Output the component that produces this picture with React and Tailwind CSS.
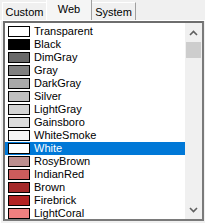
import React from 'react';

const colors = [
  { name: 'Transparent', hex: '#ffffff' },
  { name: 'Black', hex: '#000000' },
  { name: 'DimGray', hex: '#696969' },
  { name: 'Gray', hex: '#808080' },
  { name: 'DarkGray', hex: '#a9a9a9' },
  { name: 'Silver', hex: '#c0c0c0' },
  { name: 'LightGray', hex: '#d3d3d3' },
  { name: 'Gainsboro', hex: '#dcdcdc' },
  { name: 'WhiteSmoke', hex: '#f5f5f5' },
  { name: 'White', hex: '#ffffff' },
  { name: 'RosyBrown', hex: '#bc8f8f' },
  { name: 'IndianRed', hex: '#cd5c5c' },
  { name: 'Brown', hex: '#a52a2a' },
  { name: 'Firebrick', hex: '#b22222' },
  { name: 'LightCoral', hex: '#f08080' },
];

function Tab({ label, active, width }) {
  if (active) {
    return (
      <div
        className="relative z-10 -mx-[1px] flex h-[21px] items-start justify-center border-l border-t border-r border-l-white border-t-white border-r-[#a0a0a0] bg-[#f5f5f5] pt-[3px]"
        style={{ width }}
      >
        {label}
      </div>
    );
  }
  return (
    <div
      className="flex h-[18px] items-start justify-center border-l border-t border-r border-l-white border-t-white border-r-[#a0a0a0] pt-[3px]"
      style={{ width }}
    >
      {label}
    </div>
  );
}

export default function App() {
  const selected = 'White';
  return (
    <div className="h-[223px] w-[205px] overflow-hidden bg-[#f0f0f0] text-[11px] leading-[13px] text-black" style={{ fontFamily: '"Liberation Sans", Arial, sans-serif' }}>
      <div className="flex h-[20px] items-end pl-[2px]">
        <Tab label="Custom" width={45} />
        <Tab label="Web" width={46} active />
        <Tab label="System" width={45} />
      </div>
      <div className="h-[203px] border-l border-t border-white pl-[2px]">
        <div className="flex h-[200px] w-[201px] border-2 border-t-[#6e6e6e] border-l-[#6e6e6e] border-r-[#7a7a7a] border-b-[#7a7a7a] bg-white">
          <div className="flex-1 overflow-hidden pt-[2px]">
            {colors.map((c) => {
              const isSel = c.name === selected;
              return (
                <div
                  key={c.name}
                  className={`flex h-[13px] items-center ${isSel ? 'bg-[#0078d7] text-white' : ''}`}
                >
                  <div
                    className="ml-[3px] h-[11px] w-[22px] border border-black"
                    style={{ backgroundColor: c.hex }}
                  />
                  <span className="ml-[4px] whitespace-nowrap">{c.name}</span>
                </div>
              );
            })}
          </div>
          <div className="flex w-[17px] flex-col bg-[#f0f0f0]">
            <div className="flex h-[19px] items-center justify-center">
              <svg width="9" height="6" viewBox="0 0 9 6">
                <path d="M1 5 L4.5 1.5 L8 5" fill="none" stroke="#606060" strokeWidth="1.6" />
              </svg>
            </div>
            <div className="mx-[1px] h-[16px] bg-[#cdcdcd]" />
            <div className="flex-1" />
            <div className="flex h-[19px] items-center justify-center">
              <svg width="9" height="6" viewBox="0 0 9 6">
                <path d="M1 1 L4.5 4.5 L8 1" fill="none" stroke="#606060" strokeWidth="1.6" />
              </svg>
            </div>
          </div>
        </div>
      </div>
    </div>
  );
}
